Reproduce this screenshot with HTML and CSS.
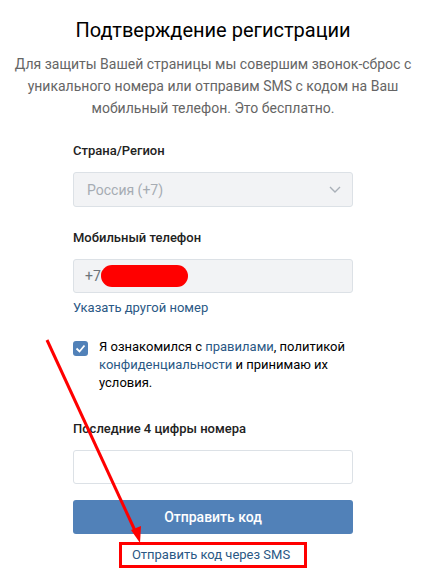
FILE: index.html
```html
<!DOCTYPE html>
<html lang="ru">
<head>
<meta charset="utf-8">
<title>Подтверждение регистрации</title>
<link rel="stylesheet" href="styles.css">
</head>
<body>
<div class="page">
  <div class="content">
    <h1 class="title">Подтверждение регистрации</h1>
    <p class="desc">Для защиты Вашей страницы мы совершим звонок-сброс с уникального номера или отправим SMS с кодом на Ваш мобильный телефон. Это бесплатно.</p>
    <div class="form">
      <div class="label">Страна/Регион</div>
      <div class="field select">
        <span class="select-text">Россия (+7)</span>
        <svg class="chevron" width="12" height="7" viewBox="0 0 12 7"><path d="M1 1l5 5 5-5" fill="none" stroke="#a9b0b8" stroke-width="1.4"/></svg>
      </div>
      <div class="label label-phone">Мобильный телефон</div>
      <div class="field phone">
        <span class="phone-text">+79</span>
        <span class="redact"></span>
      </div>
      <a class="link other" href="#">Указать другой номер</a>
      <div class="agree">
        <span class="checkbox">
          <svg width="11" height="9" viewBox="0 0 11 9"><path d="M1.5 4.5l3 3 5-6" fill="none" stroke="#fff" stroke-width="1.8"/></svg>
        </span>
        <span class="agree-text">Я ознакомился с <a class="link" href="#">правилами</a>, политикой <a class="link" href="#">конфиденциальности</a> и принимаю их условия.</span>
      </div>
      <div class="label label-code">Последние 4 цифры номера</div>
      <div class="field code"></div>
      <button class="btn">Отправить код</button>
      <div class="sms-row"><a class="sms" href="#">Отправить код через SMS</a></div>
    </div>
  </div>
  <svg class="arrow" width="440" height="582" viewBox="0 0 440 582">
    <line x1="47" y1="340" x2="137" y2="535" stroke="#ff0000" stroke-width="3"/>
    <polygon points="140,543 131,530 141,526" fill="#ff0000"/>
  </svg>
</div>
</body>
</html>
```

FILE: styles.css
```css
html, body {
  margin: 0;
  padding: 0;
  background: #fff;
}
body {
  font-family: Roboto, "Noto Sans", Arial, sans-serif;
  color: #000;
}
.page {
  position: relative;
  width: 440px;
  height: 582px;
  overflow: hidden;
}
.content {
  width: 426px;
}
.title {
  margin: 18px 0 0;
  font-size: 20px;
  line-height: 24px;
  font-weight: 400;
  text-align: center;
  color: #000;
}
.desc {
  margin: 11px 10px 0;
  font-size: 14px;
  line-height: 22px;
  color: #656565;
  text-align: center;
}
.form {
  width: 280px;
  margin: 0 auto;
  padding-top: 24px;
  display: flex;
  flex-direction: column;
}
.label {
  font-size: 13px;
  line-height: 16px;
  font-weight: 500;
  color: #222;
}
.field {
  box-sizing: border-box;
  height: 35px;
  border: 1px solid #dce1e6;
  border-radius: 3px;
  margin-top: 13px;
  display: flex;
  align-items: center;
}
.select {
  background: #f2f3f5;
  padding: 0 11px 0 13px;
  justify-content: space-between;
}
.select-text {
  font-size: 14px;
  color: #a6acb3;
}
.label-phone {
  margin-top: 23px;
}
.phone {
  height: 34px;
  background: #f2f3f5;
  padding-left: 11px;
}
.phone-text {
  font-size: 14px;
  color: #6d7379;
}
.redact {
  width: 87px;
  height: 22px;
  border-radius: 11px;
  background: #ff0000;
  margin-left: -8px;
}
.link {
  color: #2a5885;
  text-decoration: none;
}
.other {
  font-size: 13px;
  line-height: 16px;
  margin-top: 7px;
}
.agree {
  display: flex;
  align-items: flex-start;
  margin-top: 23px;
}
.checkbox {
  flex: 0 0 15px;
  width: 15px;
  height: 15px;
  border-radius: 3px;
  background: #5181b8;
  display: flex;
  align-items: center;
  justify-content: center;
  margin-top: 2px;
}
.agree-text {
  margin-left: 11px;
  margin-top: -1px;
  font-size: 13px;
  line-height: 18px;
  color: #000;
}
.label-code {
  margin-top: 29px;
}
.code {
  height: 34px;
  background: #fff;
  margin-top: 13px;
}
.btn {
  margin-top: 16px;
  height: 34px;
  border: 0;
  border-radius: 3px;
  background: #5181b8;
  color: #fff;
  font-family: Roboto, Arial, sans-serif;
  font-size: 14px;
  font-weight: 500;
  padding: 0;
}
.sms-row {
  display: flex;
  justify-content: center;
  margin-top: 8px;
}
.sms {
  display: block;
  box-sizing: border-box;
  height: 26px;
  border: 3px solid #ff0000;
  padding: 0 14px 0 10px;
  font-size: 13px;
  line-height: 20px;
  color: #2a5885;
  text-decoration: none;
}
.arrow {
  position: absolute;
  left: 0;
  top: 0;
  pointer-events: none;
}
```
